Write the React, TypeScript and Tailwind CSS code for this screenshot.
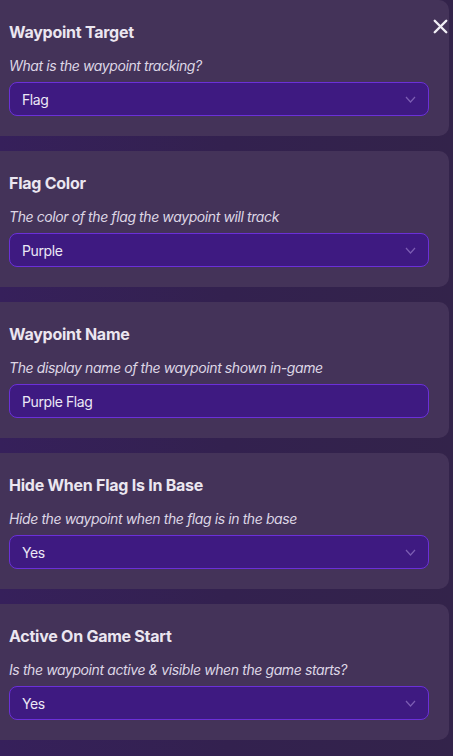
import { FC } from 'react'
import { X } from 'lucide-react'

type Field = {
  title: string
  hint: string
  value: string
  select: boolean
}

const fields: Field[] = [
  { title: 'Waypoint Target', hint: 'What is the waypoint tracking?', value: 'Flag', select: true },
  { title: 'Flag Color', hint: 'The color of the flag the waypoint will track', value: 'Purple', select: true },
  { title: 'Waypoint Name', hint: 'The display name of the waypoint shown in-game', value: 'Purple Flag', select: false },
  { title: 'Hide When Flag Is In Base', hint: 'Hide the waypoint when the flag is in the base', value: 'Yes', select: true },
  { title: 'Active On Game Start', hint: 'Is the waypoint active & visible when the game starts?', value: 'Yes', select: true },
]

const Chevron: FC = () => (
  <svg width="11" height="7" viewBox="0 0 11 7" fill="none" className="text-[#7c5db3]">
    <polyline points="1,1 5.5,6 10,1" stroke="currentColor" strokeWidth="1.2" />
  </svg>
)

const FieldCard: FC<{ field: Field }> = ({ field }) => (
  <div className="-ml-3 w-[461px] shrink-0 rounded-[10px] bg-[#443359] pl-[21px] pr-5 pt-5 pb-5">
    <div className="text-[16px] leading-6 font-bold tracking-[-0.25px] text-[#ebe6f0]">{field.title}</div>
    <div className="mt-3 text-[14px] leading-5 italic tracking-[-0.4px] text-[#ddd6e5]">{field.hint}</div>
    <div className="mt-1.5 flex h-[34px] items-center justify-between rounded-lg border border-[#6b30d8] bg-[#3e1a81] pl-3 pr-3">
      <span className="text-[14px] tracking-[-0.4px] text-[#ece8f5]">{field.value}</span>
      {field.select && <Chevron />}
    </div>
  </div>
)

const App: FC = () => {
  return (
    <div
      className="relative h-[756px] w-[453px] overflow-hidden bg-gradient-to-r from-[#36205b] via-[#33214f] to-[#33234a]"
      style={{ fontFamily: 'Inter, "Noto Sans", sans-serif' }}
    >
      <div className="flex flex-col gap-[15px]">
        {fields.map((f) => (
          <FieldCard key={f.title} field={f} />
        ))}
      </div>
      <button className="absolute right-[1px] top-[15px] text-[#f1eef5]">
        <X size={23} strokeWidth={2.5} />
      </button>
    </div>
  )
}

export default App
